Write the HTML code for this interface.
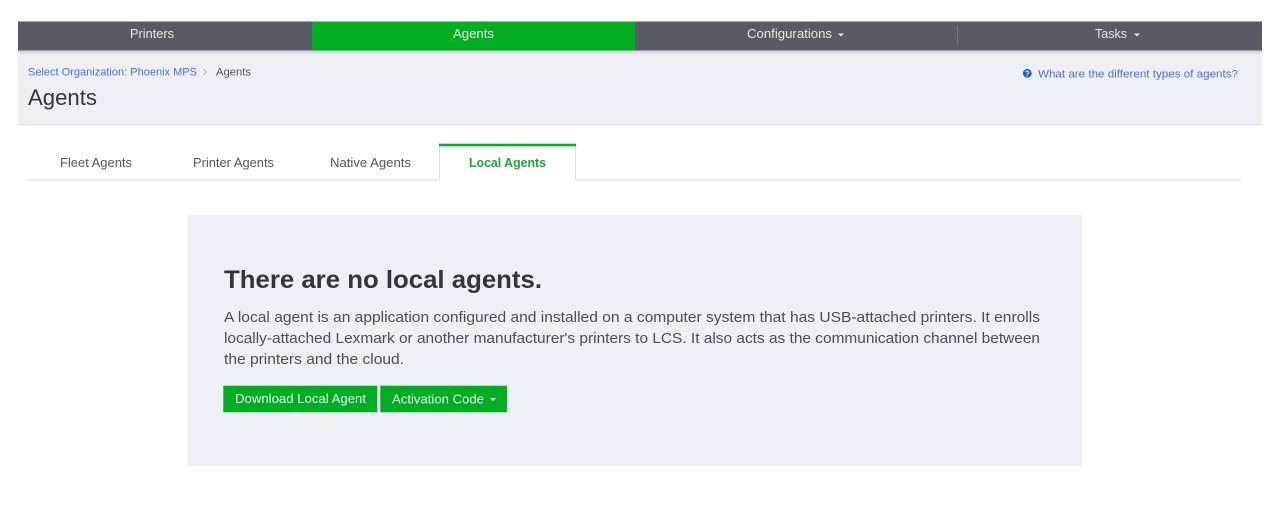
<!DOCTYPE html>
<html lang="en">
<head>
<meta charset="utf-8">
<title>Agents</title>
<style>
html,body{margin:0;padding:0;background:#fff;width:1280px;height:524px;overflow:hidden}
svg{display:block;filter:blur(0.35px)}
text{font-family:"Liberation Sans",sans-serif}
</style>
</head>
<body>
<svg width="1280" height="524" viewBox="0 0 1280 524" xmlns="http://www.w3.org/2000/svg">
<defs>
<linearGradient id="sh" x1="0" y1="0" x2="0" y2="1"><stop offset="0" stop-color="#c9cad0"/><stop offset="1" stop-color="#eff0f5"/></linearGradient>
</defs>
<!-- header band -->
<rect x="18" y="50" width="1244" height="74" fill="#eff0f5"/>
<rect x="18" y="50" width="1244" height="5" fill="url(#sh)"/>
<rect x="18" y="124" width="1244" height="1.2" fill="#dfe0e4"/>
<!-- nav -->
<rect x="18" y="21.5" width="1244" height="29" fill="#5a5a64"/>
<rect x="312" y="21.5" width="323" height="29" fill="#00ad23"/>
<rect x="957" y="26" width="1" height="19" fill="#74747c"/>
<g font-size="13" fill="#e6e6ea">
<text x="130" y="38" textLength="44" lengthAdjust="spacingAndGlyphs">Printers</text>
<text x="453" y="38" textLength="41" lengthAdjust="spacingAndGlyphs" fill="#f2fbf3">Agents</text>
<text x="747" y="38" textLength="85" lengthAdjust="spacingAndGlyphs">Configurations</text>
<text x="1095" y="38" textLength="32" lengthAdjust="spacingAndGlyphs">Tasks</text>
</g>
<path d="M838 33.5h6l-3 3z" fill="#e6e6ea"/>
<path d="M1134 33.5h6l-3 3z" fill="#e6e6ea"/>
<!-- breadcrumb -->
<text x="28" y="75.5" font-size="11" fill="#4a72d6" textLength="169" lengthAdjust="spacingAndGlyphs">Select Organization: Phoenix MPS</text>
<path d="M203.5 69l3 3-3 3" fill="none" stroke="#a9aab2" stroke-width="0.8"/>
<text x="216" y="75.5" font-size="11" fill="#55555e" textLength="35" lengthAdjust="spacingAndGlyphs">Agents</text>
<text x="28" y="105" font-size="22" fill="#34343c" textLength="69" lengthAdjust="spacingAndGlyphs">Agents</text>
<!-- help -->
<circle cx="1027.3" cy="73.3" r="4.4" fill="#1f5fb5"/>
<text x="1027.3" y="76.3" font-size="8" font-weight="bold" fill="#eff0f5" text-anchor="middle">?</text>
<text x="1038" y="77.5" font-size="11" fill="#4a72d6" textLength="200" lengthAdjust="spacingAndGlyphs">What are the different types of agents?</text>
<!-- tabs -->
<rect x="28" y="179.3" width="1213" height="1.4" fill="#e2e3e6"/>
<rect x="439" y="144" width="137" height="37" fill="#fff"/>
<rect x="439" y="146" width="1" height="34" fill="#dcdde0"/>
<rect x="575" y="146" width="1" height="34" fill="#dcdde0"/>
<rect x="439" y="143.7" width="137" height="2.6" fill="#00ad23"/>
<g font-size="13" fill="#55555e">
<text x="60" y="167" textLength="72" lengthAdjust="spacingAndGlyphs">Fleet Agents</text>
<text x="193" y="167" textLength="81" lengthAdjust="spacingAndGlyphs">Printer Agents</text>
<text x="330" y="167" textLength="81" lengthAdjust="spacingAndGlyphs">Native Agents</text>
</g>
<text x="469" y="167" font-size="13" font-weight="bold" fill="#1fa53a" textLength="77" lengthAdjust="spacingAndGlyphs">Local Agents</text>
<!-- panel -->
<rect x="188" y="215" width="894" height="251" fill="#eff0f5"/>
<text x="224" y="288" font-size="25" font-weight="bold" fill="#34343c" textLength="318" lengthAdjust="spacingAndGlyphs">There are no local agents.</text>
<g font-size="15" fill="#4c4c54">
<text x="224" y="322" textLength="816" lengthAdjust="spacingAndGlyphs">A local agent is an application configured and installed on a computer system that has USB-attached printers. It enrolls</text>
<text x="224" y="343" textLength="816" lengthAdjust="spacingAndGlyphs">locally-attached Lexmark or another manufacturer's printers to LCS. It also acts as the communication channel between</text>
<text x="224" y="364" textLength="180" lengthAdjust="spacingAndGlyphs">the printers and the cloud.</text>
</g>
<!-- buttons -->
<rect x="223.3" y="385.7" width="154" height="26.6" fill="#00ad23"/>
<rect x="380.3" y="385.7" width="126.7" height="26.6" fill="#00ad23"/>
<g font-size="13" fill="#eefaf0">
<text x="235" y="403" textLength="131" lengthAdjust="spacingAndGlyphs">Download Local Agent</text>
<text x="392" y="403.5" textLength="92" lengthAdjust="spacingAndGlyphs">Activation Code</text>
</g>
<path d="M490 398h6l-3 3z" fill="#eefaf0"/>
</svg>
</body>
</html>
